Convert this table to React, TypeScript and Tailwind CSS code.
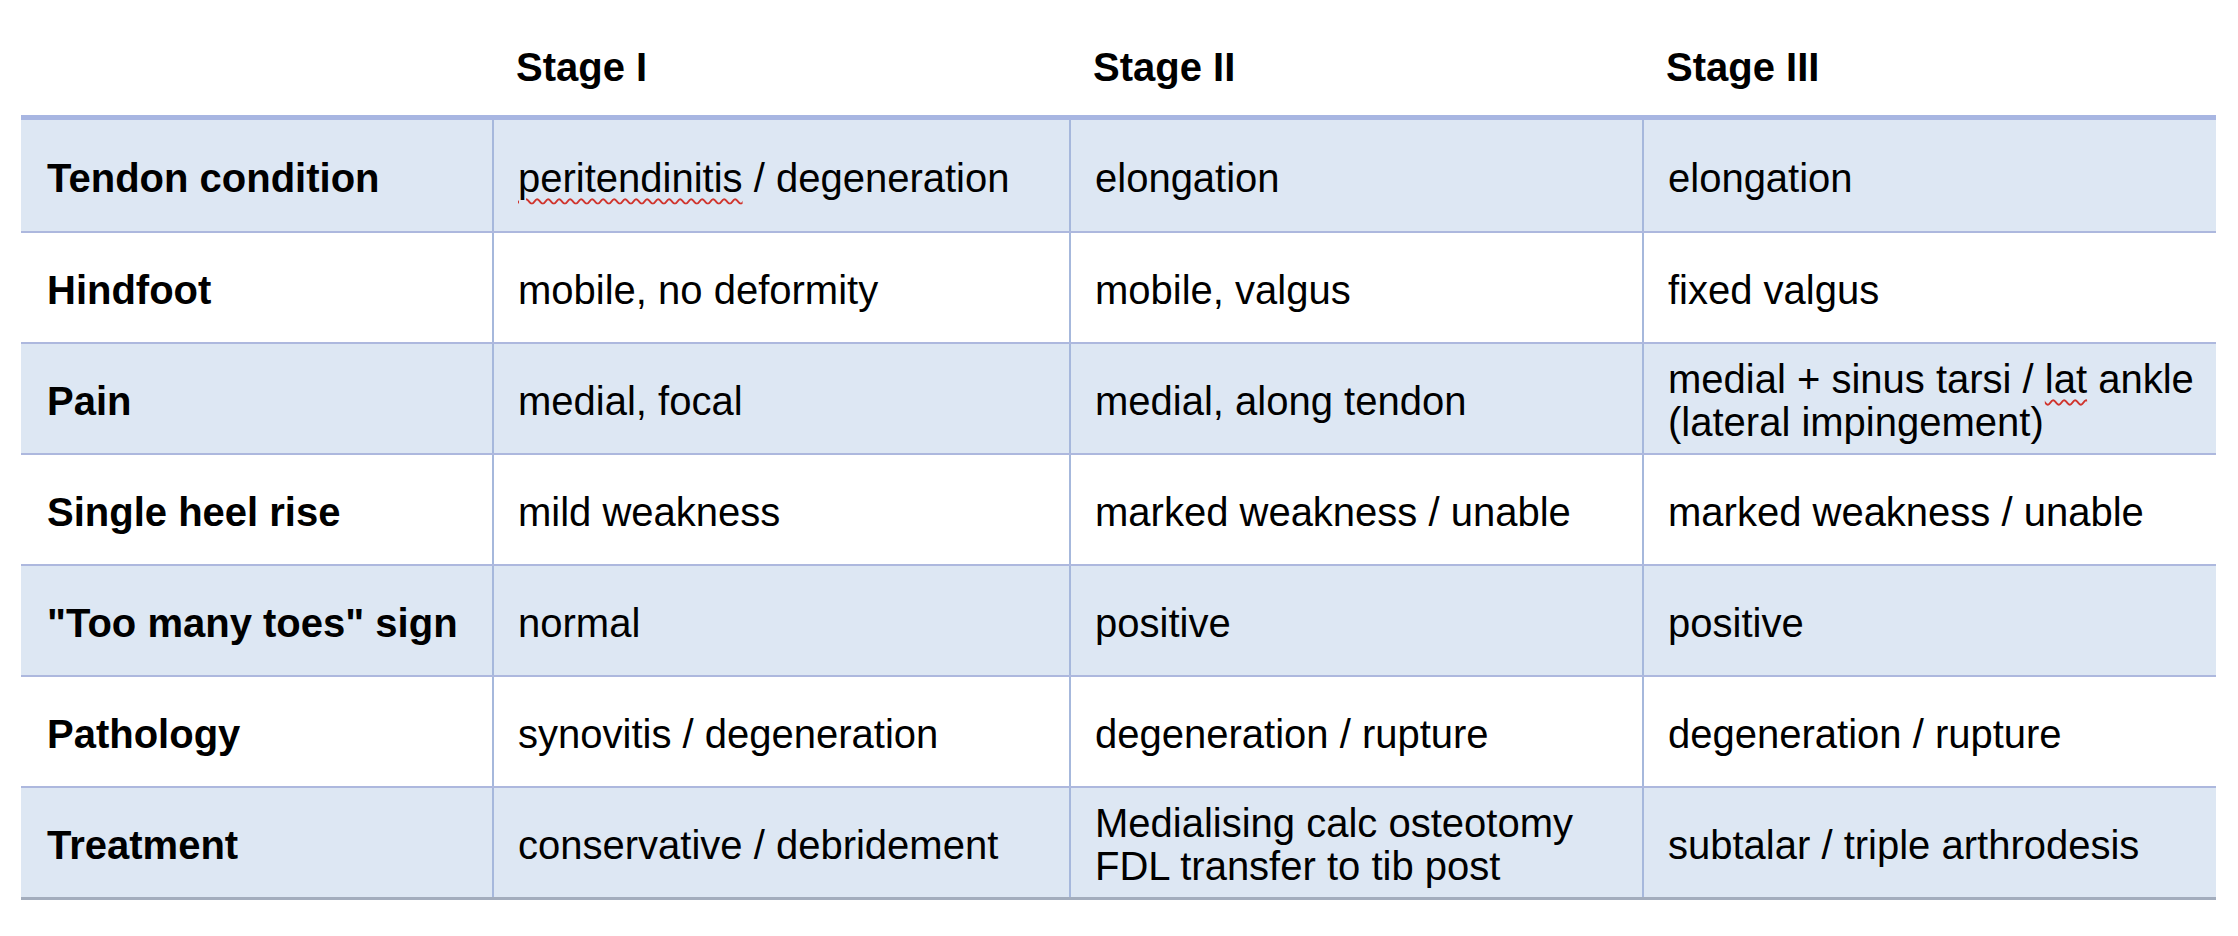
import * as React from "react"

type Cell = React.ReactNode

const Squiggle = ({ children }: { children: React.ReactNode }) => (
  <span className="underline decoration-wavy decoration-[#d0342c] decoration-[1.5px] underline-offset-[6px]">
    {children}
  </span>
)

const rows: { label: string; cells: Cell[] }[] = [
  {
    label: "Tendon condition",
    cells: [
      <>
        <Squiggle>peritendinitis</Squiggle> / degeneration
      </>,
      "elongation",
      "elongation",
    ],
  },
  { label: "Hindfoot", cells: ["mobile, no deformity", "mobile, valgus", "fixed valgus"] },
  {
    label: "Pain",
    cells: [
      "medial, focal",
      "medial, along tendon",
      <>
        medial + sinus tarsi / <Squiggle>lat</Squiggle> ankle
        <br />
        (lateral impingement)
      </>,
    ],
  },
  {
    label: "Single heel rise",
    cells: ["mild weakness", "marked weakness / unable", "marked weakness / unable"],
  },
  { label: "\"Too many toes\" sign", cells: ["normal", "positive", "positive"] },
  {
    label: "Pathology",
    cells: ["synovitis / degeneration", "degeneration / rupture", "degeneration / rupture"],
  },
  {
    label: "Treatment",
    cells: [
      "conservative / debridement",
      <>
        Medialising calc osteotomy
        <br />
        FDL transfer to tib post
      </>,
      "subtalar / triple arthrodesis",
    ],
  },
]

const stages = ["Stage I", "Stage II", "Stage III"]

export default function App() {
  return (
    <div
      className="w-[2238px] h-[936px] bg-white text-black pl-[21px] pr-[22px]"
      style={{ fontFamily: '"Liberation Sans", Arial, sans-serif' }}
    >
      {/* header */}
      <div className="grid grid-cols-[471px_577px_573px_1fr] h-[115px] items-center">
        <div />
        {stages.map((s) => (
          <div key={s} className="pl-[24px] pt-[18px] text-[40px] font-bold">
            {s}
          </div>
        ))}
      </div>

      {/* table */}
      <div className="border-t-[5px] border-[#a8b6e2] border-b-[3px] border-b-[#a3adbd]">
        {rows.map((row, i) => (
          <div
            key={row.label}
            className={`grid grid-cols-[471px_577px_573px_1fr] h-[111px] text-[40px] leading-[43px] ${
              i % 2 === 0 ? "bg-[#dde7f3]" : "bg-white"
            } ${i > 0 ? "border-t-2 border-[#adb8de]" : ""}`}
          >
            <div className="flex items-center pl-[26px] pt-[5px] font-bold">{row.label}</div>
            {row.cells.map((c, j) => (
              <div key={j} className="flex items-center pl-[24px] pt-[5px] border-l-2 border-[#a6b8dc]">
                <div>{c}</div>
              </div>
            ))}
          </div>
        ))}
      </div>
    </div>
  )
}
